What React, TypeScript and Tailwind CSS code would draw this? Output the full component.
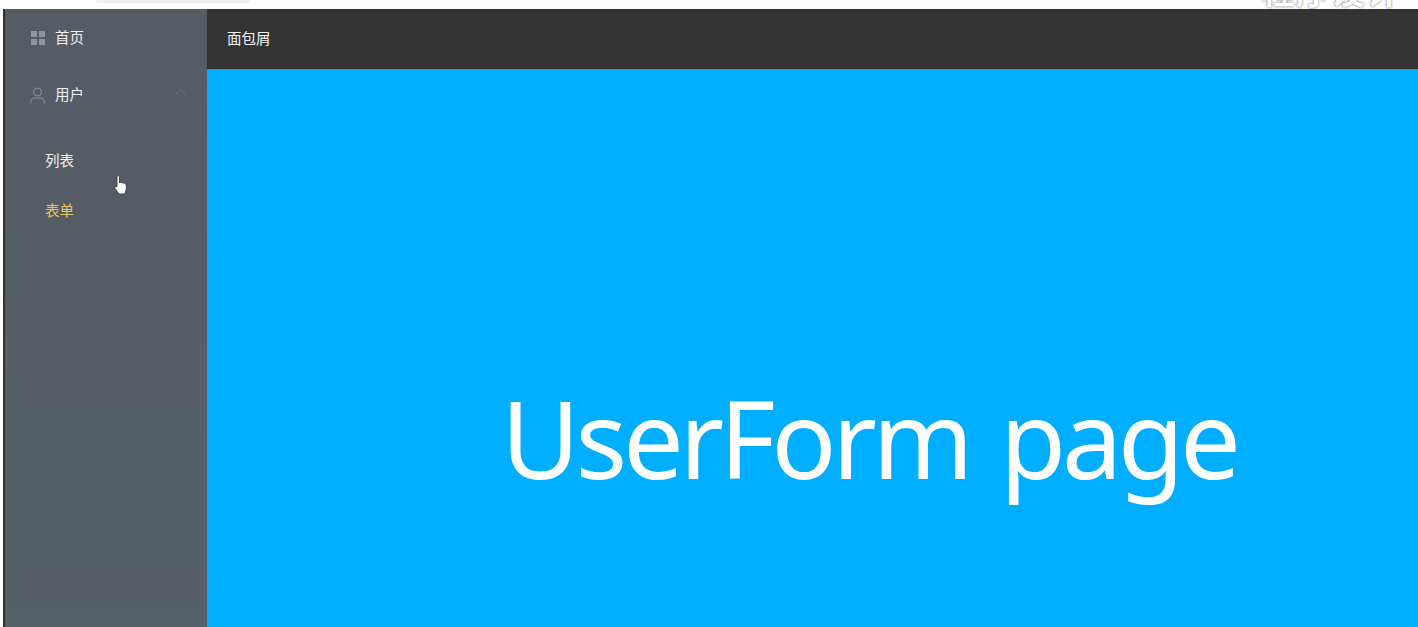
export default function App() {
  const cjk = { fontFamily: '"Liberation Sans", "Noto Sans CJK SC", sans-serif' };
  return (
    <div className="relative flex h-[627px] w-[1418px] flex-col overflow-hidden bg-white" style={cjk}>
      <div className="flex h-[9px] shrink-0 bg-[#fdfdfd] pl-[96px]">
        <div className="h-[3px] w-[154px] rounded-b-md bg-[#eeeeee]" />
      </div>
      <div className="flex min-h-0 flex-1 pl-[3px]">
        <aside className="w-[204px] shrink-0 border-l-2 border-[#2f3335] bg-gradient-to-b from-[#555c66] to-[#575f68] text-[14.5px] text-white">
          <div className="flex h-[58px] items-center pl-[26px]">
            <svg width="14" height="14" viewBox="0 0 14 14" fill="#8f959c" className="mr-[10px]">
              <rect x="0" y="0" width="6" height="6" />
              <rect x="8" y="0" width="6" height="6" />
              <rect x="0" y="8" width="6" height="6" />
              <rect x="8" y="8" width="6" height="6" />
            </svg>
            <span className="relative top-px text-[#f0f1f2]">首页</span>
          </div>
          <div className="flex h-[56px] items-center pl-[25px]">
            <svg width="15" height="17" viewBox="0 0 15 17" fill="none" stroke="#8f959c" strokeWidth="1" className="mr-[10px]">
              <circle cx="7.5" cy="5" r="4" />
              <path d="M0.8 16.5v-2.5a3.5 3.5 0 0 1 3.5-3h6.4a3.5 3.5 0 0 1 3.5 3v2.5" />
            </svg>
            <span className="relative top-px text-[#f0f1f2]">用户</span>
            <svg width="11" height="6" viewBox="0 0 11 6" fill="none" stroke="#757c84" strokeWidth="1" className="relative top-[-3px] ml-[91px]">
              <path d="M0.5 5.5 5.5 0.8l5 4.7" />
            </svg>
          </div>
          <div className="mt-[13px] bg-[#555c65]">
            <div className="flex h-[50px] items-center pl-[40px] pt-[2px] text-[#f0f1f2]">列表</div>
            <div className="flex h-[50px] items-center pl-[40px] pt-[2px] text-[#eec25c]">表单</div>
          </div>
        </aside>
        <main className="flex min-w-0 flex-1 flex-col">
          <header className="flex h-[60px] shrink-0 items-center border-b border-[#2a2c2e] bg-[#333333] pl-5 pt-[2px] text-[14.5px] text-[#f4f4f4]">面包屑</header>
          <div
            className="flex-1 bg-[#00aeff] pl-[294px] pt-[301px] text-[108px] leading-[136px] tracking-[-4.4px] [word-spacing:7px] text-white"
            style={{ fontFamily: '"Noto Sans", sans-serif' }}
          >
            UserForm page
          </div>
        </main>
      </div>
      <div className="absolute right-[17px] top-[-25px] text-[34px] font-bold leading-[34px] tracking-[1px] text-white [text-shadow:0_0_2px_#444]">程序设计</div>
      <svg className="absolute left-[114px] top-[175px]" width="13" height="20" viewBox="0 0 13 20">
        <path d="M3 1.600C3 .4 5.400 .4 5.400 1.600V8L6 7.400C6.600 7 7.600 7.200 7.800 8C8.400 7.400 9.500 7.600 9.800 8.500C10.400 8 11.800 8.400 12 9.500C12.500 12 12.300 14.500 11.800 16L11 19H5L1 13.500C.2 12.200 1.500 10.800 3 11.800Z" fill="#fff" stroke="#2b2f33" strokeWidth="0.8" />
      </svg>
    </div>
  );
}
